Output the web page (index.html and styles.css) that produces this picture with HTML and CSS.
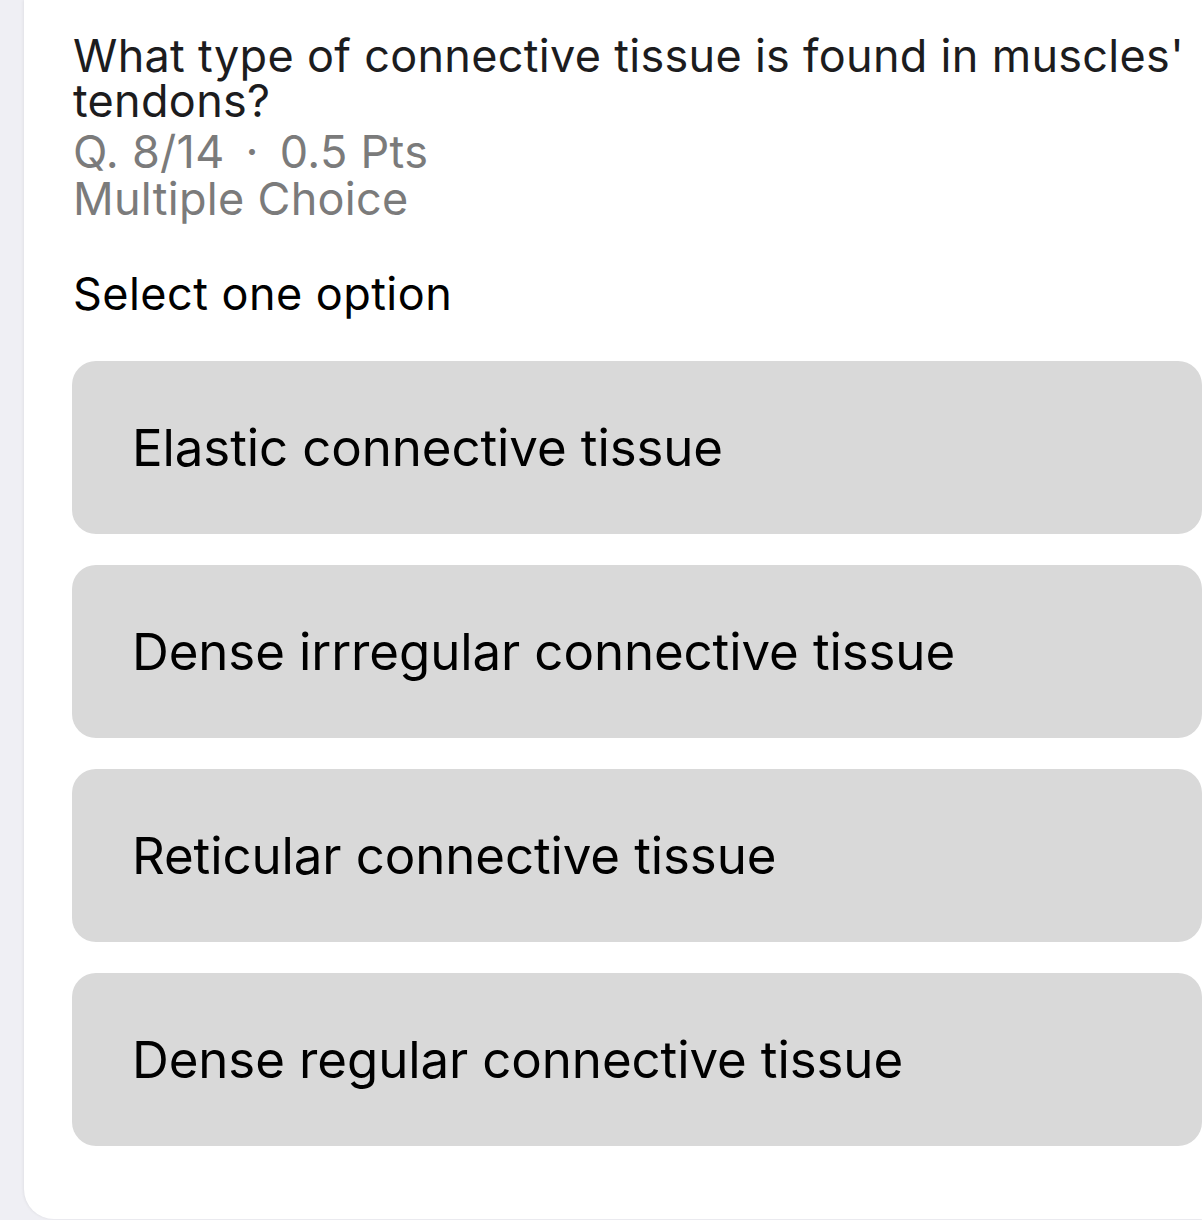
FILE: index.html
```html
<!DOCTYPE html>
<html lang="en">
<head>
<meta charset="utf-8">
<title>Question 8</title>
<link rel="stylesheet" href="styles.css">
</head>
<body>
<div class="page">
  <main class="card">
    <header class="question">
      <h1 class="question-title">What type of connective tissue is found in muscles' tendons?</h1>
      <div class="question-meta">
        <div>Q. 8/14 <span class="dot">·</span> 0.5 Pts</div>
        <div>Multiple Choice</div>
      </div>
    </header>
    <p class="instruction">Select one option</p>
    <ul class="options">
      <li class="option">Elastic connective tissue</li>
      <li class="option">Dense irrregular connective tissue</li>
      <li class="option">Reticular connective tissue</li>
      <li class="option">Dense regular connective tissue</li>
    </ul>
  </main>
</div>
</body>
</html>
```

FILE: styles.css
```css
html, body {
  margin: 0;
  padding: 0;
}
body {
  background: #efeff4;
  font-family: Inter, "Noto Sans", sans-serif;
  overflow: hidden;
}
.page {
  padding-left: 24px;
  height: 1220px;
  box-sizing: border-box;
}
.card {
  background: #ffffff;
  height: 1219px;
  box-sizing: border-box;
  border-radius: 0 0 0 30px;
  box-shadow: -1px 0 3px rgba(0, 0, 0, 0.06);
  padding: 33px 0 0 49px;
}
.question-title {
  margin: 0;
  font-size: 45px;
  font-weight: 400;
  line-height: 45px;
  color: #1c1c1e;
  letter-spacing: 0.3px;
}
.question-meta {
  margin-top: 5px;
  font-size: 45px;
  line-height: 47px;
  color: #7b7b7b;
  letter-spacing: 0.3px;
}
.dot {
  margin: 0 8px;
}
.instruction {
  margin: 48px 0 0;
  font-size: 45px;
  line-height: 47px;
  color: #000;
  letter-spacing: 0.45px;
}
.options {
  list-style: none;
  margin: 44px 0 0 -1px;
  padding: 0;
  display: flex;
  flex-direction: column;
  gap: 31px;
}
.option {
  height: 173px;
  box-sizing: border-box;
  background: #d9d9d9;
  border-radius: 24px;
  display: flex;
  align-items: center;
  padding-left: 60px;
  font-size: 51px;
  color: #000;
  letter-spacing: -0.1px;
}
```
